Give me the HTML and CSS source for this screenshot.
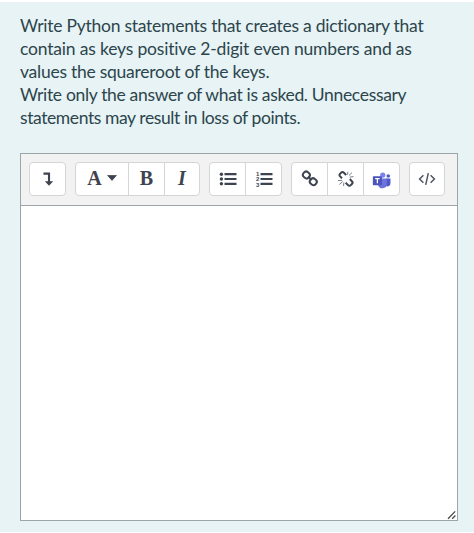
FILE: index.html
```
<!DOCTYPE html>
<html lang="en">
<head>
  <meta charset="UTF-8" />
  <meta name="viewport" content="width=device-width, initial-scale=1.0"/>
  <title>Quiz question</title>
  <link rel="stylesheet" href="styles.css">
</head>
<body>
  <div class="question">
    <div class="qtext">
      <span class="line l1">Write Python statements that creates a dictionary that</span>
      <span class="line l2">contain as keys positive 2-digit even numbers and as</span>
      <span class="line l3">values the squareroot of the keys.</span>
      <span class="line l4">Write only the answer of what is asked. Unnecessary</span>
      <span class="line l5">statements may result in loss of points.</span>
    </div>

    <div class="editor">
      <div class="toolbar">
        <div class="group">
          <button class="w35" aria-label="Show more buttons">
            <svg width="18" height="18" viewBox="0 0 16 16"><path d="M4 3.2h4.9v8" fill="none" stroke="#3d444f" stroke-width="1.9"/><path d="M5.2 10h7.4L8.9 14z" fill="#3d444f"/></svg>
          </button>
        </div>
        <div class="group">
          <button class="w52 serif" aria-label="Paragraph styles">A
            <svg class="caret" width="10" height="6" viewBox="0 0 10 6"><path d="M.6.4h8.8L5 5.4z" fill="#3d444f" stroke="#3d444f" stroke-width=".8" stroke-linejoin="round"/></svg>
          </button>
          <button class="w36 serif" aria-label="Bold">B</button>
          <button class="w35 serif italic" aria-label="Italic">I</button>
        </div>
        <div class="group">
          <button class="w35" aria-label="Unordered list">
            <svg width="18" height="16" viewBox="0 0 18 16"><g fill="#3d444f"><circle cx="2.4" cy="3.2" r="1.7"/><circle cx="2.4" cy="8" r="1.7"/><circle cx="2.4" cy="12.8" r="1.7"/><path d="M5.5 2.1h12v2.2h-12zM5.5 6.9h12v2.2h-12zM5.5 11.7h12v2.2h-12z"/></g></svg>
          </button>
          <button class="w36" aria-label="Ordered list">
            <svg width="18" height="18" viewBox="0 0 18 18"><path d="M5.5 3.1h12v2.2h-12zM5.5 7.9h12v2.2h-12zM5.5 12.7h12v2.2h-12z" fill="#3d444f"/><g class="nums"><text x="1" y="5.6">1</text><text x="1" y="11.3">2</text><text x="1" y="17">3</text></g></svg>
          </button>
        </div>
        <div class="group">
          <button class="w35" aria-label="Link">
            <svg width="18" height="18" viewBox="0 0 18 18"><g fill="none" stroke="#3d444f" stroke-width="2"><rect x="2" y="1.9" width="6.8" height="6.2" rx="2.8" transform="rotate(40 5.4 5)"/><rect x="8.9" y="8.6" width="6.8" height="6.2" rx="2.8" transform="rotate(40 12.3 11.7)"/><path d="M7 6.5l3.7 3.5"/></g></svg>
          </button>
          <button class="w36" aria-label="Unlink">
            <svg width="18" height="18" viewBox="0 0 18 18"><g fill="none" stroke="#3d444f" stroke-width="2"><path d="M5 8.3L3.1 6.4Q1.8 5 3.2 3.6l.9-.9Q5.5 1.3 6.9 2.7L9.2 5"/><path d="M8.7 12.8l2.3 2.3q1.4 1.4 2.8 0l1.1-1.1q1.4-1.4 0-2.8L12.8 9"/></g><path d="M10.5 4.6l.4-2.8M12 5.5l2.9-2.8M12.7 7.2l3.7-.7M6.9 12.5l-.4 3.4M5.7 11.5l-3.4 3M5 10.3l-3.9.3" stroke="#777c84" stroke-width="1" fill="none"/></svg>
          </button>
          <button class="w36" aria-label="Insert Teams meeting">
            <svg class="teams" width="19" height="19" viewBox="0 0 18 18"><circle cx="15.4" cy="4.7" r="1.7" fill="#5059c9"/><path d="M13 7h4.5v4.6a3 3 0 0 1-4.5 2.7z" fill="#5059c9"/><circle cx="10.2" cy="3.9" r="2.5" fill="#7b83eb"/><path d="M6 7h8v5.2a4.2 4.2 0 0 1-8.2 1.2z" fill="#6c74dc"/><rect x=".8" y="4.9" width="8.6" height="8.6" rx=".7" fill="#4b53bc"/><path d="M3 7.2h4.2M5.1 7.2v4.5" stroke="#fff" stroke-width="1.2"/></svg>
          </button>
        </div>
        <div class="group">
          <button class="w34" aria-label="HTML">
            <svg width="18" height="14" viewBox="0 0 18 14"><path d="M5.4 3.3L1.6 7l3.8 3.7M12.6 3.3L16.4 7l-3.8 3.7M10.3 1.2L7.7 12.8" fill="none" stroke="#50555e" stroke-width="1.5"/></svg>
          </button>
        </div>
      </div>
      <div class="content" contenteditable="true">
        <svg class="grip" width="10" height="10" viewBox="0 0 10 10"><path d="M1 8.8L8.2 1.4M5.2 8.8l3.2-3.3" stroke="#4b4b4b" stroke-width="1.3"/></svg>
      </div>
    </div>
  </div>
</body>
</html>
```
FILE: styles.css
```
* {
  box-sizing: border-box;
}

body {
  margin: 0;
  background-color: #ffffff;
}

.question {
  height: 530px;
  margin-top: 2px;
  padding: 12px 16px 0 20px;
  background-color: #e7f3f5;
  color: #2c454c;
  font-family: Lato, sans-serif;
}

.qtext {
  height: 139px;
  font-size: 17.5px;
  line-height: 23px;
}

.line {
  display: block;
  white-space: nowrap;
}

.l1 {
  letter-spacing: -0.25px;
}

.l2 {
  letter-spacing: -0.18px;
}

.l3 {
  letter-spacing: -0.25px;
}

.l4 {
  letter-spacing: -0.33px;
}

.l5 {
  letter-spacing: -0.41px;
}

.editor {
  width: 438px;
  height: 368px;
  border: 1px solid #9ca5aa;
  display: flex;
  flex-direction: column;
  background-color: #fff;
}

.toolbar {
  display: flex;
  gap: 9px;
  height: 52px;
  padding: 8px;
  background-color: #f2f2f2;
  border-bottom: 1px solid #9ca5aa;
}

.group {
  display: flex;
  height: 34px;
  border: 1px solid #d3d5d7;
  border-radius: 4px;
  background-color: #fff;
  overflow: hidden;
}

button {
  display: flex;
  align-items: center;
  justify-content: center;
  height: 32px;
  padding: 0;
  border: 0;
  background: none;
  color: #3d444f;
}

button + button {
  border-left: 1px solid #d3d5d7;
}

.w34 {
  width: 34px;
}

.w35 {
  width: 35px;
}

.w36 {
  width: 36px;
}

.w52 {
  width: 52px;
}

.serif {
  font-family: "Liberation Serif", serif;
  font-size: 20px;
  font-weight: bold;
  padding-bottom: 2px;
}

.italic {
  font-style: italic;
}

.caret {
  margin-left: 5px;
}

.teams {
  margin-top: 2px;
}

.nums {
  font-family: "Liberation Sans", sans-serif;
  font-size: 6px;
  font-weight: bold;
  fill: #3d444f;
}

.content {
  flex: 1;
  display: flex;
  align-items: flex-end;
  justify-content: flex-end;
}
```
